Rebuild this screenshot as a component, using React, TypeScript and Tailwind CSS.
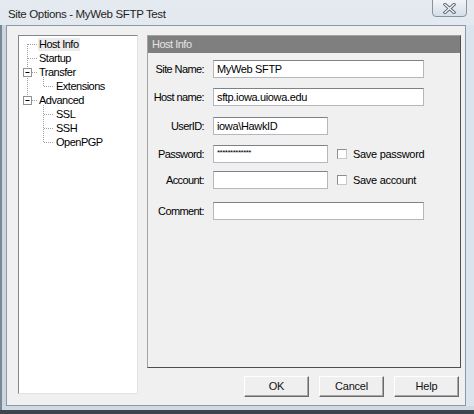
import React from "react";

const font = { fontFamily: '"Liberation Sans", Arial, sans-serif' };

function Field({ label, width, value, mt, extra }: { label: string; width: number; value?: React.ReactNode; mt: string; extra?: React.ReactNode }) {
  return (
    <div className={`flex items-center ${mt}`}>
      <div className="w-[56px] text-right text-[11px] leading-none text-black tracking-[-0.6px]">{label}</div>
      <div
        className="ml-[9px] h-[18px] bg-white border border-[#b4b8be] border-t-[#7d8288] flex items-center pl-[3px] text-[11px] text-black tracking-[-0.35px]"
        style={{ width }}
      >
        {value}
      </div>
      {extra}
    </div>
  );
}

function Check({ label }: { label: string }) {
  return (
    <div className="flex items-center ml-[9px]">
      <div className="w-[10px] h-[10px] bg-white border border-[#8e8e8e] border-r-[#c8c8c8] border-b-[#c8c8c8]" />
      <span className="ml-[6px] text-[11px] text-black tracking-[-0.3px]">{label}</span>
    </div>
  );
}

function Btn({ label }: { label: string }) {
  return (
    <div className="w-[65px] h-[21px] bg-[#efefef] border border-white border-r-[#6a6a6a] border-b-[#6a6a6a] shadow-[inset_-1px_-1px_0_#a8a8a8] flex items-center justify-center text-[11px] text-[#111] tracking-[-0.2px]">
      {label}
    </div>
  );
}

export default function App() {
  const rows: { t: string; x: number; sel?: boolean }[] = [
    { t: "Host Info", x: 19, sel: true },
    { t: "Startup", x: 20 },
    { t: "Transfer", x: 20 },
    { t: "Extensions", x: 37 },
    { t: "Advanced", x: 20 },
    { t: "SSL", x: 37 },
    { t: "SSH", x: 37 },
    { t: "OpenPGP", x: 37 },
  ];
  return (
    <div className="w-[474px] h-[414px] bg-[#3d444c] overflow-hidden" style={font}>
      <div className="h-[410px] flex flex-col bg-gradient-to-b from-[#e4eaf0] via-[#dbe3eb] to-[#cfd9e3] relative">
        {/* title bar */}
        <div className="h-[25px] flex items-start relative">
          <div className="mt-[6px] ml-[8px] text-[11.5px] text-[#1e1e1e] tracking-[-0.35px]">Site Options - MyWeb SFTP Test</div>
          <div className="absolute left-[432px] top-[-1px] w-[35px] h-[18px] rounded-b-[4px] border border-[#8592a0] bg-gradient-to-b from-[#f2f5f8] to-[#d6dee6] flex items-center justify-center">
            <svg width="13" height="11" viewBox="0 0 13 11">
              <path d="M2 1.5 L11 9.5 M11 1.5 L2 9.5" stroke="#5a6470" strokeWidth="3.2" strokeLinecap="square" fill="none" />
              <path d="M2 1.5 L11 9.5 M11 1.5 L2 9.5" stroke="#f4f6f8" strokeWidth="1.4" strokeLinecap="square" fill="none" />
            </svg>
          </div>
        </div>
        {/* frame + client */}
        <div className="flex">
          <div className="w-[6px] flex">
            <div className="w-[2px] bg-[#7a8795]" />
            <div className="flex-1 bg-[#ccd6e0]" />
          </div>
          <div className="w-[460px] h-[381px] bg-[#f0f0f0] border border-[#8d99a6] pl-[11px] pt-[9px] pr-[4px] flex">
            {/* tree */}
            <div className="w-[120px] h-[359px] bg-white border border-[#828790] border-r-[#e3e3e3] border-b-[#e3e3e3] relative pt-[1px]">
              <svg className="absolute left-0 top-0" width="118" height="120" viewBox="0 0 118 120">
                <g stroke="#a0a0a0" strokeWidth="1" strokeDasharray="1 1" fill="none">
                  <path d="M8.5 8 V64" />
                  <path d="M9 8.5 H18 M9 22.5 H18 M13 36.5 H18 M13 64.5 H18" />
                  <path d="M24.5 41 V50 M25 50.5 H34" />
                  <path d="M24.5 69 V106 M25 78.5 H34 M25 92.5 H34 M25 106.5 H34" />
                </g>
                <g fill="#fff" stroke="#919191">
                  <rect x="4.5" y="32.5" width="8" height="8" />
                  <rect x="4.5" y="60.5" width="8" height="8" />
                </g>
                <path d="M6.5 36.5 H10.5 M6.5 64.5 H10.5" stroke="#000" strokeWidth="1" />
              </svg>
              <div className="relative flex flex-col">
                {rows.map((r) => (
                  <div key={r.t} className="h-[14px] flex items-center">
                    <span
                      className={`text-[11px] leading-none text-black tracking-[-0.5px] ${r.sel ? "bg-[#ebebeb] px-[1px] py-[1px]" : ""}`}
                      style={{ marginLeft: r.x }}
                    >
                      {r.t}
                    </span>
                  </div>
                ))}
              </div>
            </div>
            {/* right column */}
            <div className="ml-[9px] flex flex-col">
              <div className="w-[314px] h-[333px] border border-[#a3a3a3] border-r-[#4e4e4e] border-b-[#4e4e4e] flex flex-col">
                <div className="h-[17px] bg-[#7f7f7f] flex items-center pl-[4px] text-[11px] text-[#e4e4e4] tracking-[-0.5px]">Host Info</div>
                <Field label="Site Name:" width={211} value="MyWeb SFTP" mt="mt-[7px]" />
                <Field label="Host name:" width={211} value="sftp.iowa.uiowa.edu" mt="mt-[10px]" />
                <Field label="UserID:" width={115} value="iowa\HawkID" mt="mt-[11px]" />
                <Field
                  label="Password:"
                  width={115}
                  value={<span className="text-[8px] tracking-[-0.5px] mt-[-2px]">*************</span>}
                  mt="mt-[10px]"
                  extra={<Check label="Save password" />}
                />
                <Field label="Account:" width={115} mt="mt-[8px]" extra={<Check label="Save account" />} />
                <Field label="Comment:" width={211} mt="mt-[13px]" />
              </div>
              <div className="mt-[8px] flex justify-end gap-[10px] pr-[2px]">
                <Btn label="OK" />
                <Btn label="Cancel" />
                <Btn label="Help" />
              </div>
            </div>
          </div>
          <div className="flex-1 bg-[#dbe4ec]" />
        </div>
        <div className="flex-1 flex">
          <div className="w-[2px] bg-[#7a8795]" />
          <div className="flex-1" />
        </div>
      </div>
    </div>
  );
}
